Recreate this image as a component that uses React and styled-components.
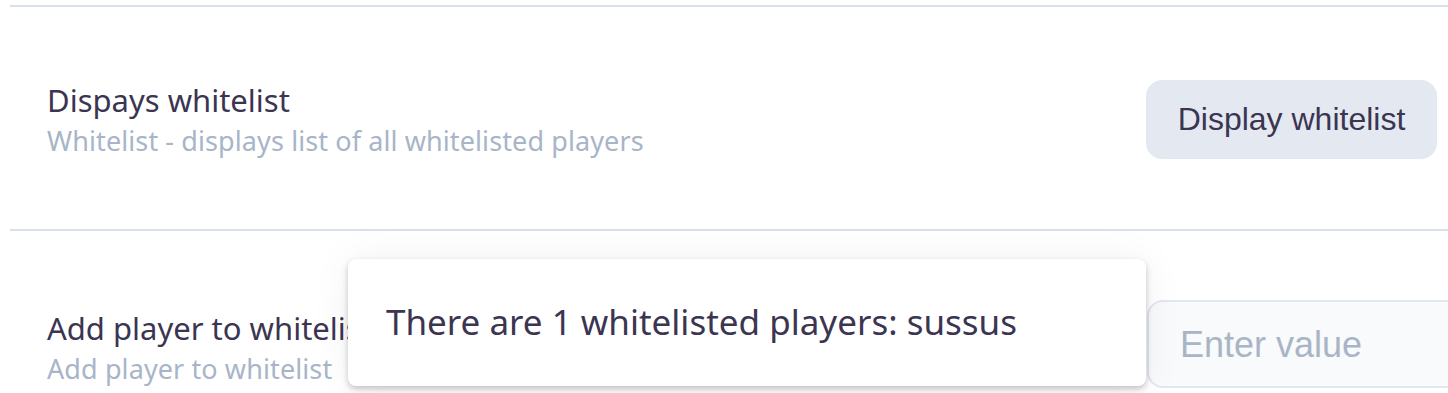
import { styled, createGlobalStyle } from 'styled-components'

const GlobalStyle = createGlobalStyle`
  html, body {
    margin: 0;
    padding: 0;
    background: #ffffff;
    overflow: hidden;
  }
  body {
    font-family: "Noto Sans", "Open Sans", sans-serif;
  }
`

const Page = styled.div`
  position: relative;
  width: 1448px;
  height: 393px;
  padding: 5px 0 0 10px;
  box-sizing: border-box;
  overflow: hidden;
`

const Row = styled.div`
  display: flex;
  align-items: center;
  justify-content: space-between;
  height: 224px;
  border-top: 2px solid #d8e0eb;
  padding: 0 11px 0 37px;
  box-sizing: border-box;
`

const Info = styled.div`
  display: flex;
  flex-direction: column;
  margin-top: ${p => p.$offset ?? 4}px;
`

const Title = styled.div`
  font-size: 31px;
  line-height: 40px;
  color: #3b3551;
  white-space: nowrap;
`

const Desc = styled.div`
  font-size: 27px;
  line-height: 40px;
  margin-top: 1px;
  color: #a8b5c8;
  letter-spacing: 0.1px;
  white-space: nowrap;
`

const Button = styled.button`
  width: 291px;
  height: 79px;
  border: none;
  border-radius: 16px;
  background: #e4e9f1;
  color: #3b3551;
  font-family: "Liberation Sans", Arial, sans-serif;
  font-size: 32px;
  margin-top: 3px;
  padding: 0;
`

const Input = styled.input`
  width: 330px;
  height: 88px;
  margin-right: -40px;
  margin-top: 4px;
  box-sizing: border-box;
  border: 2px solid #e3e8ef;
  border-radius: 16px;
  background: #f9fafb;
  padding: 2px 31px 0;
  font-family: "Liberation Sans", Arial, sans-serif;
  font-size: 36px;
  color: #3b3551;
  &::placeholder {
    color: #a9b5c6;
  }
`

const Toast = styled.div`
  position: absolute;
  left: 348px;
  top: 259px;
  width: 798px;
  height: 127px;
  box-sizing: border-box;
  background: #ffffff;
  border-radius: 8px;
  box-shadow: 0 3px 6px rgba(0, 0, 0, 0.22), 0 0 40px rgba(0, 0, 0, 0.06);
  display: flex;
  align-items: center;
  padding: 0 38px 2px;
  font-size: 35px;
  color: #3b3551;
  white-space: nowrap;
`

function App() {
  return (
    <>
      <GlobalStyle />
      <Page>
        <Row>
          <Info>
            <Title>Dispays whitelist</Title>
            <Desc>Whitelist - displays list of all whitelisted players</Desc>
          </Info>
          <Button>Display whitelist</Button>
        </Row>
        <Row>
          <Info $offset={12}>
            <Title>Add player to whitelist</Title>
            <Desc>Add player to whitelist</Desc>
          </Info>
          <Input placeholder="Enter value" />
        </Row>
        <Toast>There are 1 whitelisted players: sussus</Toast>
      </Page>
    </>
  )
}

export default App
